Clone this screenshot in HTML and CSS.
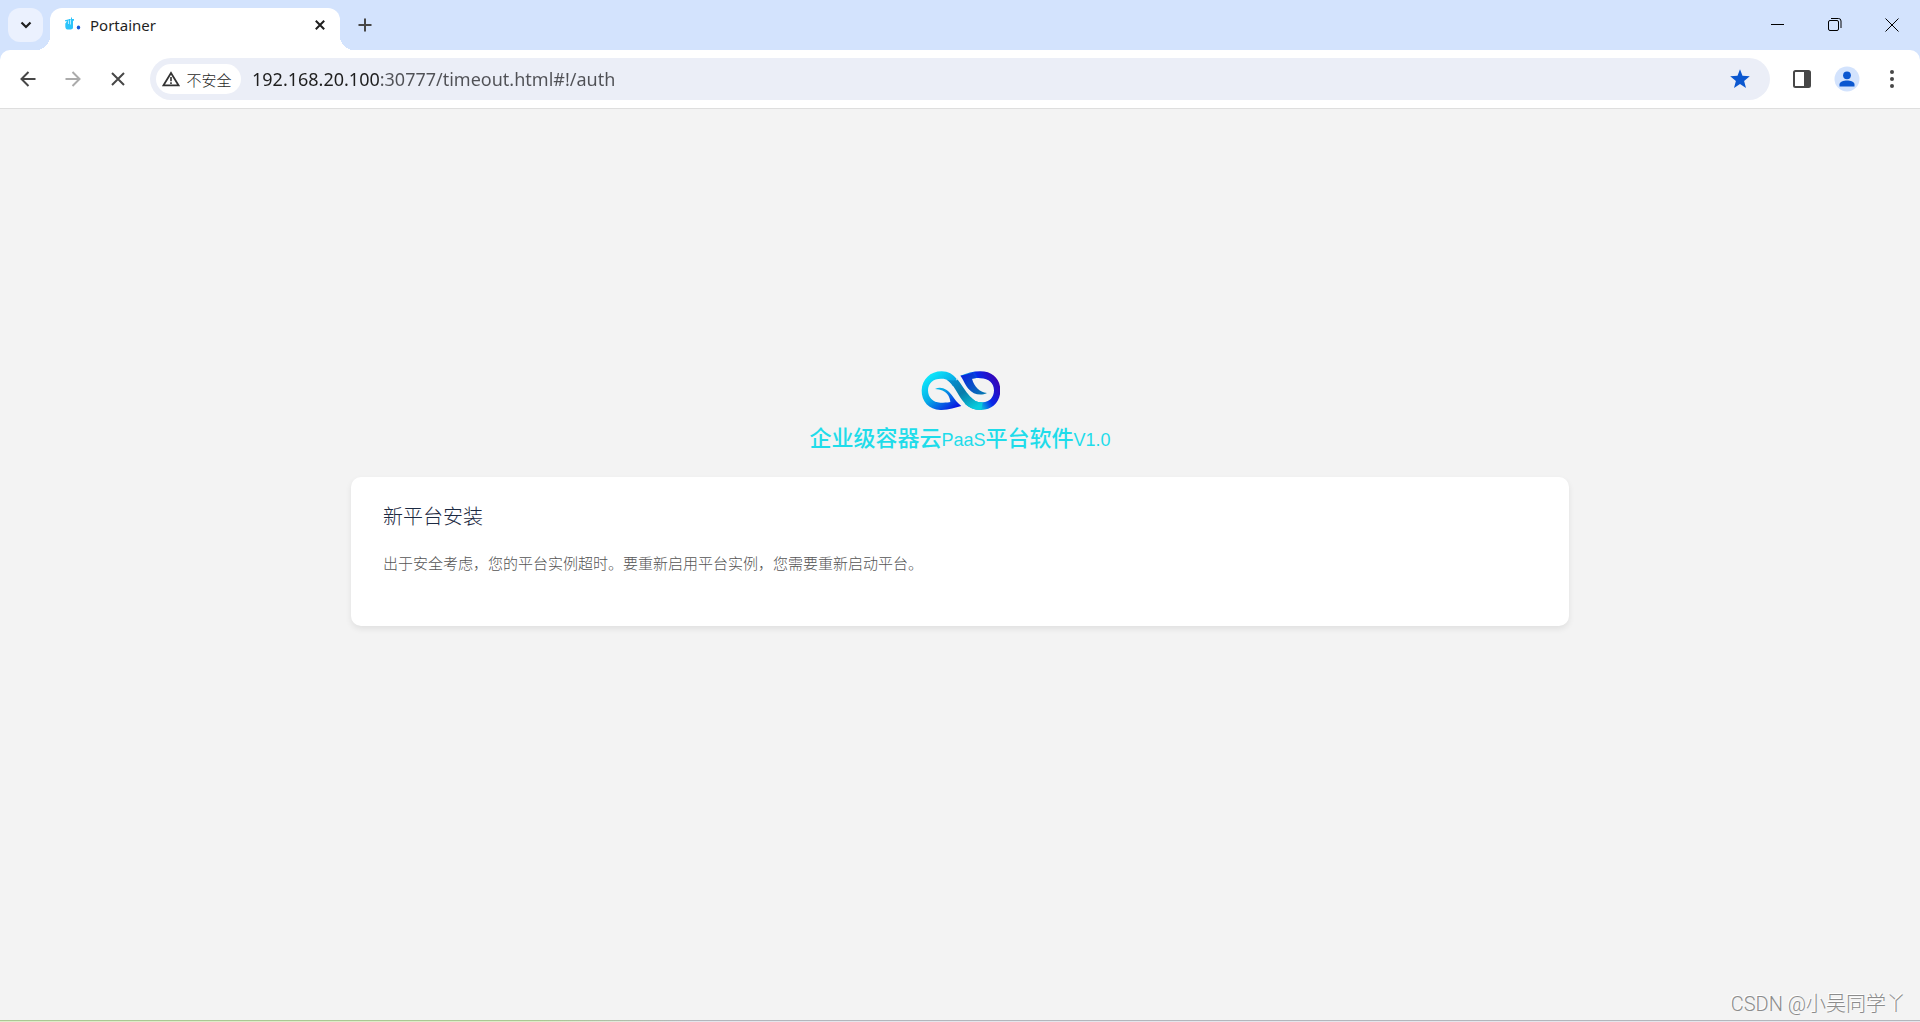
FILE: index.html
```html
<!DOCTYPE html>
<html lang="zh-CN">
<head>
  <meta charset="UTF-8">
  <title>Portainer</title>
  <meta name="viewport" content="width=device-width, initial-scale=1">
  <link rel="stylesheet" href="styles.css">
</head>
<body>
  <header class="browser">
    <!-- Tab strip -->
    <div class="tab-strip">
      <button class="tab-search" aria-label="搜索标签页">
        <svg width="12" height="8" viewBox="0 0 12 8"><path d="M1.500 1.500 6 6l4.500-4.500" fill="none" stroke="#1f1f1f" stroke-width="2.200"/></svg>
      </button>
      <div class="tab">
        <svg class="favicon" width="16" height="16" viewBox="0 0 16 16">
          <path d="M0 3.200 4 2.200V2h5V3.800H8V10.500c0 1-1 2-2.500 2H2.500C1 12.500.3 11 .3 9.500V6.500L2 4.200H0z" fill="#2cc4fb"/>
          <path d="M3.500 3.500v3.500M5.500 2.500v5" stroke="#b5ecff"/>
          <path d="M6.500.5v3" stroke="#2cc4fb"/>
          <ellipse cx="13.500" cy="10.500" rx="1.700" ry="2" fill="#1557d8"/>
        </svg>
        <span class="tab-title">Portainer</span>
        <button class="tab-close" aria-label="关闭">
          <svg width="10" height="10" viewBox="0 0 10 10"><path d="M.8.8l8.400 8.400M9.200.8.8 9.200" stroke="#1f1f1f" stroke-width="2"/></svg>
        </button>
      </div>
      <button class="new-tab" aria-label="新标签页">
        <svg width="14" height="14" viewBox="0 0 14 14"><path d="M7 .5v13M.5 7h13" stroke="#474747" stroke-width="2"/></svg>
      </button>
      <div class="window-controls">
        <button aria-label="最小化"><svg width="14" height="14" viewBox="0 0 14 14"><path d="M0 6.500h13" stroke="#000"/></svg></button>
        <button aria-label="还原"><svg width="14" height="14" viewBox="0 0 14 14"><rect x=".5" y="2.500" width="10" height="10" rx="1.500" fill="none" stroke="#000"/><path d="M3 .5h7.500a2.500 2.500 0 0 1 2.500 2.500V10" fill="none" stroke="#000"/></svg></button>
        <button aria-label="关闭窗口"><svg width="14" height="14" viewBox="0 0 14 14"><path d="M.5.5l13 13M13.500.5l-13 13" stroke="#000"/></svg></button>
      </div>
    </div>

    <!-- Toolbar -->
    <nav class="toolbar">
      <button class="tool" aria-label="后退">
        <svg width="16" height="16" viewBox="0 0 16 16"><path d="M15.500 8H2M8.500 1 1.500 8l7 7" fill="none" stroke="#474747" stroke-width="2"/></svg>
      </button>
      <button class="tool" aria-label="前进" disabled>
        <svg width="16" height="16" viewBox="0 0 16 16"><path d="M.5 8H14M7.500 1l7 7-7 7" fill="none" stroke="#ababab" stroke-width="2"/></svg>
      </button>
      <button class="tool" aria-label="停止">
        <svg width="14" height="14" viewBox="0 0 14 14"><path d="M1 1l12 12M13 1 1 13" stroke="#474747" stroke-width="2"/></svg>
      </button>
      <div class="omnibox">
        <button class="site-info">
          <svg width="18" height="16" viewBox="0 0 18 16"><path d="M9 2 1.500 14.300h15z" fill="none" stroke="#333" stroke-width="1.800"/><path d="M9 6v4.200M9 11.300v1.700" stroke="#333" stroke-width="1.600"/></svg>
          不安全
        </button>
        <input class="url" type="text" aria-label="地址" value="192.168.20.100:30777/timeout.html#!/auth">
        <button class="bookmark" aria-label="修改书签">
          <svg width="20" height="20" viewBox="0 0 20 20"><path d="M10 .2l2.500 6.600 7.300.5-5.700 4.600 1.900 7.100L10 15l-6 4 1.900-7.100L.2 7.300l7.300-.5z" fill="#0b57d0"/></svg>
        </button>
      </div>
      <button class="tool" aria-label="侧边栏">
        <svg width="18" height="18" viewBox="0 0 18 18"><rect x="1" y="1" width="16" height="16" rx="1.500" fill="#fff" stroke="#474747" stroke-width="2"/><path d="M11 1h6v16h-6z" fill="#474747"/></svg>
      </button>
      <button class="tool" aria-label="个人资料">
        <svg width="26" height="26" viewBox="0 0 26 26"><circle cx="13" cy="13" r="12.500" fill="#d3e3fd"/><circle cx="13" cy="9.300" r="3.900" fill="#0b57d0"/><path d="M5.500 20.500v-2c0-2.800 4-4 7.500-4s7.500 1.200 7.500 4v2z" fill="#0b57d0"/></svg>
      </button>
      <button class="tool" aria-label="菜单">
        <svg width="4" height="18" viewBox="0 0 4 18"><g fill="#474747"><circle cx="2" cy="2" r="2"/><circle cx="2" cy="9" r="2"/><circle cx="2" cy="16" r="2"/></g></svg>
      </button>
    </nav>
  </header>

  <!-- Page -->
  <main class="page">
    <div class="brand">
      <svg class="brand-logo" width="80" height="40" viewBox="31 20 240 120">
        <defs>
          <linearGradient id="left" x1="0" y1="0" x2=".8" y2="1">
            <stop offset=".15" stop-color="#0ee8fb"/>
            <stop offset=".55" stop-color="#06a9e6"/>
            <stop offset="1" stop-color="#0714e0"/>
          </linearGradient>
          <linearGradient id="right" x1="140" y1="110" x2="265" y2="45" gradientUnits="userSpaceOnUse">
            <stop offset="0" stop-color="#0792c4"/>
            <stop offset=".4" stop-color="#08bfe0"/>
            <stop offset=".65" stop-color="#0828e8"/>
            <stop offset="1" stop-color="#3a00b4"/>
          </linearGradient>
          <linearGradient id="curl" x1="0" y1="0" x2="1" y2="1">
            <stop offset="0" stop-color="#0a1ce4"/>
            <stop offset="1" stop-color="#077fae"/>
          </linearGradient>
          <linearGradient id="fold" x1="0" y1="0" x2=".7" y2="1">
            <stop offset="0" stop-color="#0792d6"/>
            <stop offset=".5" stop-color="#087bab"/>
            <stop offset="1" stop-color="#08cddd"/>
          </linearGradient>
        </defs>
        <path fill="url(#left)" d="M155 125C136 130 116 138 92 137C58 136 35 112 36 78C37 45 62 21 96 21C116 21 130 30 141 44L130 66C120 49 110 42 94 43C70 43 55 57 55 78C55 99 70 115 92 115C103 115 112 115 122 113C121 98 112 76 76 74C94 64 113 74 126 92C135 105 143 116 155 125Z"/>
        <path fill="url(#right)" d="M165 118C180 132 197 138 215 137C249 136 272 112 272 78C272 45 250 21 212 21C190 21 171 27 152 34L186 43C195 41 203 41 212 42C238 43 253 57 253 78C253 99 239 114 219 114C203 115 192 108 182 97Z"/>
        <path fill="url(#curl)" d="M152 34C160 43 165 59 176 73C191 91 213 95 232 86C209 82 194 68 187 43L200 41L190 25Z"/>
        <path fill="url(#fold)" d="M112 47C127 49 151 50 141 42C155 59 166 80 182 97C192 108 203 115 219 114L215 137C190 137 174 128 160 111C145 92 133 60 112 47Z"/>
      </svg>
      <div class="brand-name">企业级容器云<span class="latin">PaaS</span>平台软件<span class="latin">V1.0</span></div>
    </div>
    <section class="column">
      <div class="panel">
        <h1>新平台安装</h1>
        <p>出于安全考虑，您的平台实例超时。要重新启用平台实例，您需要重新启动平台。</p>
      </div>
    </section>
    <div class="watermark">CSDN @小吴同学丫</div>
  </main>
  <div class="bottom-edge"></div>
</body>
</html>
```

FILE: styles.css
```css
* {
  box-sizing: border-box;
}

body {
  margin: 0;
  min-height: 100vh;
  display: flex;
  flex-direction: column;
  background: #f3f3f3;
  font-family: "Noto Sans", "Noto Sans CJK SC", sans-serif;
  color: #1f1f1f;
}

button {
  display: flex;
  align-items: center;
  justify-content: center;
  padding: 0;
  border: none;
  background: none;
  color: inherit;
  font-family: inherit;
}

.browser {
  background: #d3e3fd;
}

/* Tab strip */
.tab-strip {
  display: flex;
  height: 50px;
  padding: 8px 0 0 8px;
}

.tab-search {
  width: 35px;
  height: 34px;
  border-radius: 12px;
  background: #ebf1fe;
}

.tab {
  position: relative;
  display: flex;
  align-items: center;
  width: 290px;
  margin-left: 7px;
  padding: 0 15px 8px;
  border-radius: 12px 12px 0 0;
  background: #fff;
}

/* curved feet of the active tab */
.tab::before,
.tab::after {
  content: "";
  position: absolute;
  bottom: 0;
  width: 14px;
  height: 14px;
}

.tab::before {
  right: 100%;
  background: radial-gradient(circle at 0 0, transparent 14px, #fff 14px);
}

.tab::after {
  left: 100%;
  background: radial-gradient(circle at 100% 0, transparent 14px, #fff 14px);
}

.tab-title {
  flex: 1;
  margin-left: 9px;
  font-size: 15px;
  line-height: 20px;
}

.tab-close {
  width: 10px;
  height: 20px;
}

.new-tab {
  width: 34px;
  height: 34px;
  margin-left: 8px;
}

.window-controls {
  display: flex;
  margin-left: auto;
}

.window-controls button {
  width: 57px;
  height: 34px;
}

/* Toolbar */
.toolbar {
  display: flex;
  align-items: center;
  height: 59px;
  padding: 0 6px 0 5px;
  border-bottom: 1px solid #dedede;
  border-radius: 10px 10px 0 0;
  background: #fff;
}

.tool {
  width: 45px;
  height: 42px;
}

.omnibox {
  flex: 1;
  display: flex;
  align-items: center;
  height: 42px;
  margin: 0 9px 0 10px;
  padding: 0 20px 0 6px;
  border-radius: 21px;
  background: #ebeef7;
}

.site-info {
  gap: 6px;
  width: 85px;
  height: 30px;
  padding-right: 3px;
  border-radius: 15px;
  background: #fff;
  font-size: 15px;
  font-weight: 300;
}

.url {
  flex: 1;
  margin-left: 11px;
  padding: 0;
  border: none;
  outline: none;
  font-family: inherit;
  font-size: 18px;
  line-height: 26px;
  /* host is darker than the rest of the address */
  background: linear-gradient(90deg, #1f1f1f 127px, #505156 127px);
  -webkit-background-clip: text;
  background-clip: text;
  color: transparent;
}

/* Page */
.page {
  flex: 1;
  position: relative;
  display: flex;
  flex-direction: column;
  align-items: center;
  padding-top: 262px;
}

.brand {
  display: flex;
  flex-direction: column;
  align-items: center;
  gap: 10px;
}

.brand-name {
  height: 32px;
  color: #1fdcea;
  font-size: 22px;
  font-weight: 500;
  line-height: 32px;
  white-space: nowrap;
}

.latin {
  font-family: "Liberation Sans", sans-serif;
  font-size: 18px;
}

.column {
  width: 65%;
  margin-top: 24px;
  padding: 0 15px;
}

.panel {
  min-height: 149px;
  padding: 24px 32px;
  border-radius: 10px;
  background: #fff;
  box-shadow: 0 3px 6px rgba(0, 0, 0, 0.08);
}

.panel h1 {
  margin: 0;
  color: #1c2a42;
  font-size: 20px;
  font-weight: 300;
  line-height: 32px;
}

.panel p {
  margin: 18px 0 0;
  color: #555;
  font-size: 15px;
  font-weight: 300;
  line-height: 24px;
}

.watermark {
  position: absolute;
  right: 14px;
  bottom: 3px;
  color: #8c8c8c;
  font-family: Roboto, "Noto Sans CJK SC", sans-serif;
  font-size: 20px;
  font-weight: 300;
  line-height: 26px;
  text-shadow: -1px -1px 0 #fff;
}

.bottom-edge {
  height: 2px;
  border-top: 1px solid #b4b6bc;
  border-image: linear-gradient(90deg, #abc793 28%, #b4b6bc 36%) 1;
  background: linear-gradient(90deg, #dcecc8 28%, #e4e5ec 36%);
}
```
